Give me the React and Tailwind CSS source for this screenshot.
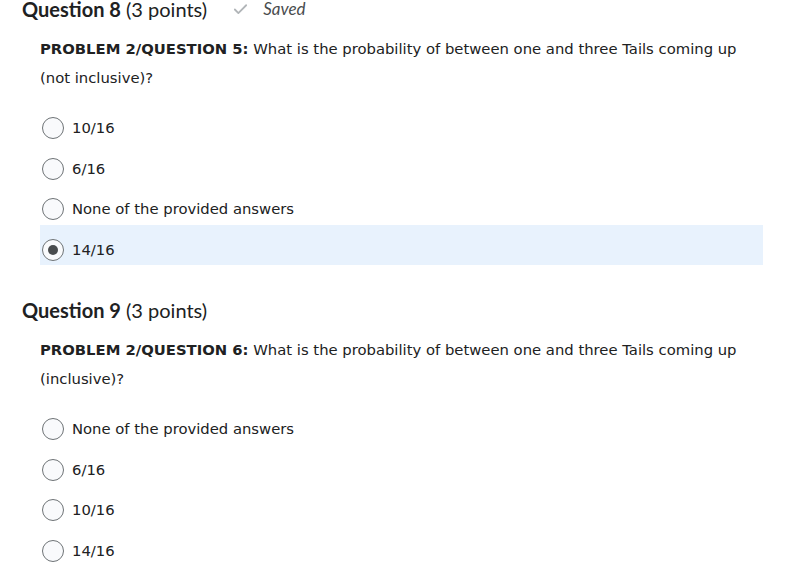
import { Check } from "lucide-react";

const body = { fontFamily: '"DejaVu Sans", Verdana, sans-serif' };
const lato = { fontFamily: 'Lato, "Noto Sans", sans-serif' };

const Radio = ({ checked }) => (
  <span className="flex h-[22px] w-[22px] shrink-0 items-center justify-center rounded-full border border-[#6e7376] bg-[#f9fafc]">
    {checked && <span className="h-[10px] w-[10px] rounded-full bg-[#494c4e]" />}
  </span>
);

const Option = ({ label, checked }) => (
  <div
    className={`flex h-[40.5px] items-start gap-[8px] pl-[2px] pt-[14px] ${
      checked ? "bg-[#e8f2fd]" : ""
    }`}
  >
    <Radio checked={checked} />
    <span className="text-[14.8px] leading-[22px] text-[#202122]" style={body}>
      {label}
    </span>
  </div>
);

const Question = ({ num, tag, text, tail, options, selected, saved, className }) => (
  <section className={className}>
    <div className="flex h-[24px] items-center" style={lato}>
      <h2 className="text-[20px] leading-[24px] text-[#202122]">
        <span className="font-bold">Question {num}</span> (3 points)
      </h2>
      {saved && (
        <div className="ml-[25px] flex items-center gap-[14px] text-[#494c4e]">
          <Check size={17} strokeWidth={2.5} className="text-[#b1b5b8]" />
          <span className="text-[17px] italic">Saved</span>
        </div>
      )}
    </div>
    <p className="ml-[18px] mt-[13px] w-[723px] text-[14.8px] leading-[29px] text-[#202122]" style={body}>
      <span className="font-bold">{tag}</span> {text}
      <br />
      {tail}
    </p>
    <div className="ml-[18px] mt-[11px] w-[723px]">
      {options.map((o) => (
        <Option key={o} label={o} checked={o === selected} />
      ))}
    </div>
  </section>
);

export default function App() {
  return (
    <div className="min-h-screen overflow-hidden bg-white pl-[22px]">
      <Question
        className="-mt-[3px]"
        num={8}
        saved
        tag="PROBLEM 2/QUESTION 5:"
        text="What is the probability of between one and three Tails coming up"
        tail="(not inclusive)?"
        options={["10/16", "6/16", "None of the provided answers", "14/16"]}
        selected="14/16"
      />
      <Question
        className="mt-[33px]"
        num={9}
        tag="PROBLEM 2/QUESTION 6:"
        text="What is the probability of between one and three Tails coming up"
        tail="(inclusive)?"
        options={["None of the provided answers", "6/16", "10/16", "14/16"]}
      />
    </div>
  );
}
